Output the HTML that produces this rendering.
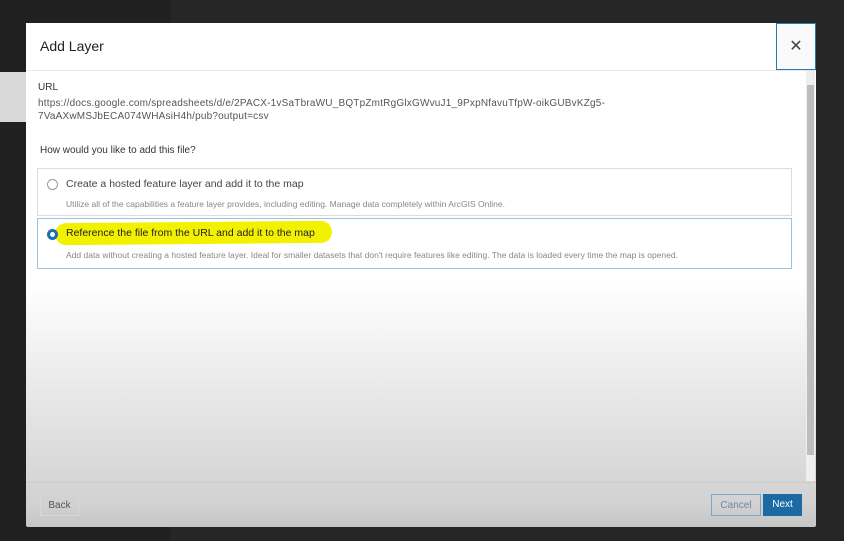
<!DOCTYPE html>
<html><head><style>
body{margin:0;width:844px;height:541px;background:#262626;font-family:"Liberation Sans",sans-serif;position:relative;overflow:hidden}
.bgl{position:absolute;left:0;top:0;width:170px;height:541px;background:#202020}
.strip{position:absolute;left:0;top:72px;width:26px;height:50px;background:#d8d8d8}
.dlg{position:absolute;left:26px;top:23px;width:790px;height:504px;background:linear-gradient(#fff 0,#fff 260px,#e6e6e6 380px,#d2d2d2 480px,#c6c6c6 504px);border-radius:2px}
.hdr{position:absolute;left:0;top:0;width:790px;height:47px;background:#fff;border-bottom:1px solid #e8e8e8}
.title{position:absolute;left:14px;top:15px;font-size:14px;color:#222}
.close{position:absolute;right:0;top:0;border:1px solid #2a7ab0;box-sizing:border-box;width:40px;height:47px;font-size:16px;color:#444;text-align:center;line-height:45px;background:#fafafa}
.sb{position:absolute;left:780px;top:48px;width:9px;height:410px;background:#efefef}
.sb i{position:absolute;left:1px;top:14px;width:7px;height:370px;background:#bdbdbd}
.t{position:absolute;font-size:9px;color:#444;white-space:nowrap}
.opt{position:absolute;left:11px;width:755px;height:48px;border:1px solid #ddd;box-sizing:border-box}
.rad{position:absolute;left:9px;top:10px;width:9px;height:9px;border:1px solid #999;border-radius:50%;background:#fff}
.foot{position:absolute;left:0;top:459px;width:790px;height:45px;border-top:1px solid #ccc}
.btn{position:absolute;top:11px;height:22px;font-size:10px;line-height:22px;text-align:center;box-sizing:border-box}
</style></head><body>
<div class="bgl"></div><div class="strip"></div>
<div class="dlg">
<div class="hdr"><div class="title">Add Layer</div><div class="close">✕</div></div>
<div class="sb"><i></i></div>
<div class="t" style="left:12px;top:59px;font-size:10px;color:#333">URL</div>
<div class="t" style="left:12px;top:75px;color:#555;font-size:10px;letter-spacing:0.2px">https://docs.google.com/spreadsheets/d/e/2PACX-1vSaTbraWU_BQTpZmtRgGlxGWvuJ1_9PxpNfavuTfpW-oikGUBvKZg5-</div>
<div class="t" style="left:12px;top:88px;color:#555;font-size:10px;letter-spacing:0.2px">7VaAXwMSJbECA074WHAsiH4h/pub?output=csv</div>
<div class="t" style="left:14px;top:122px;color:#333;font-size:10px">How would you like to add this file?</div>
<div class="opt" style="top:145px"><div class="rad"></div>
<div class="t" style="left:28px;top:9px;font-size:10.5px;color:#444">Create a hosted feature layer and add it to the map</div>
<div class="t" style="left:28px;top:30px;font-size:8.5px;color:#888">Utilize all of the capabilities a feature layer provides, including editing. Manage data completely within ArcGIS Online.</div></div>
<div class="opt" style="top:195px;border-color:#9cc3dd;height:51px">
<div style="position:absolute;left:17px;top:3px;width:277px;height:22px;background:#f2f200;border-radius:11px;transform:rotate(-0.5deg)"></div>
<div class="rad" style="border:3px solid #1a6fb0;width:5px;height:5px"></div>
<div class="t" style="left:28px;top:8px;font-size:10.5px;color:#222">Reference the file from the URL and add it to the map</div>
<div class="t" style="left:28px;top:31px;font-size:8.5px;color:#888">Add data without creating a hosted feature layer. Ideal for smaller datasets that don't require features like editing. The data is loaded every time the map is opened.</div></div>
<div class="foot">
<div class="btn" style="left:14px;width:39px;border:1px solid #d8d8d8;color:#555">Back</div>
<div class="btn" style="left:685px;width:50px;border:1px solid #7aa8c8;color:#6a8aa8">Cancel</div>
<div class="btn" style="left:737px;width:39px;background:#1b6aa3;color:#fff">Next</div>
</div>
</div>
</body></html>
